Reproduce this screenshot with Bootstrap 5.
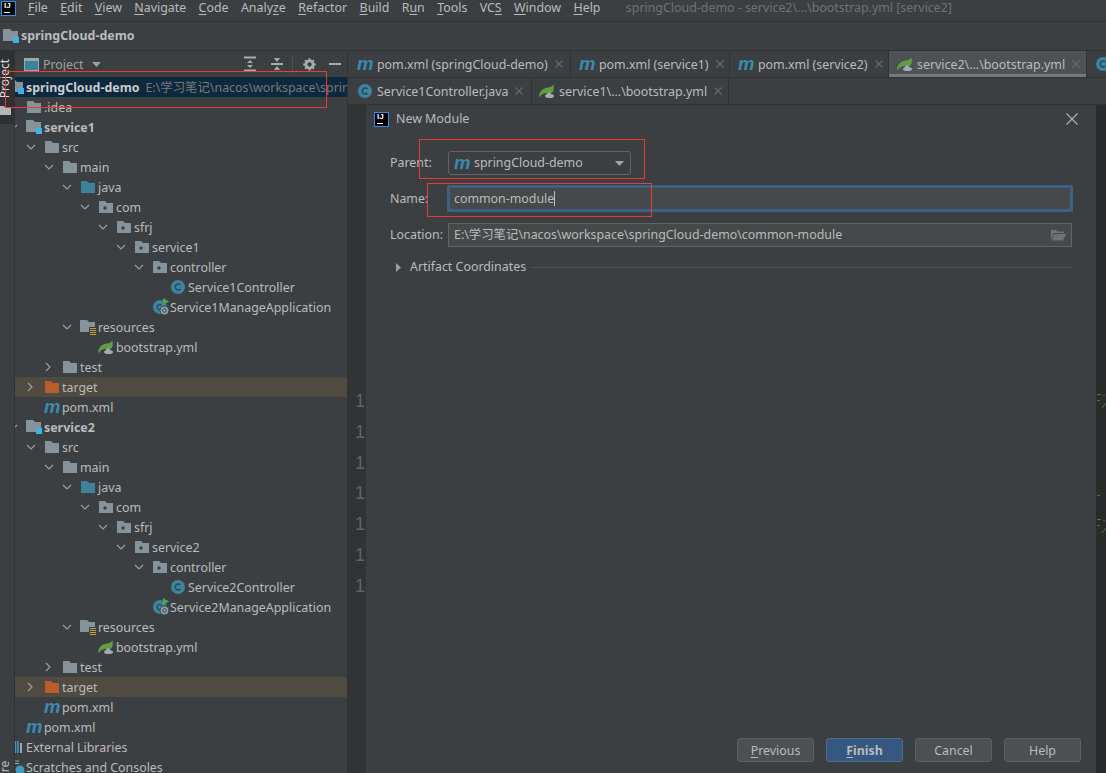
<!DOCTYPE html>
<html lang="en">
<head>
<meta charset="utf-8">
<title>springCloud-demo</title>
<link rel="stylesheet" href="https://cdn.jsdelivr.net/npm/bootstrap@5.3.0/dist/css/bootstrap.min.css">
<style>
html,body{height:773px;overflow:hidden;background:#3c3f41;}
body{position:relative;font-family:"Noto Sans","Noto Sans CJK SC",sans-serif;font-size:12.4px;color:#bbb;line-height:20px;}
svg{display:block;flex:none;}
.menu-bar{height:22px;border-bottom:1px solid #323232;padding:0 0 5px 1px;white-space:nowrap;overflow:hidden;}
.app-logo{width:15px;height:15px;background:#000;border:1px solid #2f8fea;color:#fff;font:700 8px/8px "Liberation Sans",sans-serif;padding-left:2px;margin-right:12px;position:relative;flex:none;}
.app-logo::after{content:"";position:absolute;left:2px;bottom:2px;width:6px;height:1px;background:#fff;}
.app-logo.dlg{margin:0 7px 0 0;}
.menu-item{margin-right:12.4px;}
.win-title{color:#6f7375;margin-left:13px;}
.crumb-bar{height:29px;border-bottom:1px solid #323232;padding:0 0 0 3px;color:#bbb;font-weight:700;}
.work{height:722px;}
.side-strip{width:15px;flex:none;border-right:1px solid #323232;overflow:hidden;}
.strip-btn{height:73px;background:#2e3032;padding-top:8px;}
.vtext{writing-mode:vertical-rl;transform:rotate(180deg);color:#ddd;line-height:10px;font-size:12px;white-space:nowrap;}
.strip-folder{margin-top:7px;}
.vtext.ure{margin-top:631px;color:#bbb;height:58px;}
.tool-pane{width:333px;flex:none;border-right:1px solid #323232;overflow:hidden;}
.tool-head{height:26px;padding-left:9px;}
.tool-title{margin-left:4px;color:#9da0a2;padding-top:2px;}
.head-caret{margin-left:9px;}
.tool-acts{margin-left:auto;padding-right:6px;}
.act-gap{margin-right:13px;}
.tool-sep{width:1px;height:17px;background:#4e5254;margin:0 10px 0 8px;}
.tree-row{height:20px;white-space:nowrap;overflow:hidden;color:#bbb;padding-top:2px;}
.tree-row.sel{background:#0d293e;color:#ccc;}
.tree-row.excl{background:#4f4b41;}
.tree-row b{font-weight:700;}
.path-note{color:#787878;margin-left:6px;}
.arr{width:18px;height:20px;flex:none;display:flex;align-items:center;}
.arr-rt{margin-left:1px;}
.ico{width:18px;flex:none;}
.tree-row .arr,.tree-row .ico,.tree-row .mvn,.ed-tab .ico,.ed-tab .mvn,.ed-tab .cls{margin-top:-2px;}
.dm{margin-left:-7px;}
.d1{margin-left:11px;}.d2{margin-left:29px;}.d3{margin-left:47px;}.d4{margin-left:65px;}
.d5{margin-left:83px;}.d6{margin-left:101px;}.d7{margin-left:119px;}.d8{margin-left:137px;}
.root-ico{margin-left:-7px;}
.mvn{font:italic 700 18.500px/20px "Liberation Sans",sans-serif;color:#3a8bb0;width:18px;flex:none;height:20px;letter-spacing:-1px;}
.editor{min-width:0;}
.tab-row{height:27px;border-bottom:1px solid #323232;}
.tab-row.first{padding-left:2px;height:27px;}
.ed-tab{height:26px;padding:2px 0 0 8px;border-right:1px solid #323232;white-space:nowrap;overflow:hidden;flex:none;color:#bbb;position:relative;}
.ed-tab .ico{margin-right:2px;width:18px;}
.ed-tab .mvn{margin-right:2px;}
.ed-tab .cls{margin-left:7px;flex:none;}
.ed-tab.on{background:#4e5254;}
.ed-tab.on::after{content:"";position:absolute;left:0;right:0;bottom:0;height:3px;background:#747a80;}
.w1{width:221px;padding-left:7px;}.w2{width:159px;}.w3{width:159px;}.w4{width:198px;}
.w5{width:184px;padding-left:9px;}.w6{width:197px;padding-left:7px;}
.ed-body{height:669px;}
.gutter{width:18px;flex:none;background:#313335;padding-top:281px;padding-left:7px;overflow:hidden;color:#606366;font:18px/30.8px "Liberation Sans",sans-serif;}
.new-module{background:#3c3f41;padding:0 15px 11px 24px;min-width:0;}
.dlg-title{height:28px;margin-left:-16px;padding-right:3px;}
.dlg-x{margin-left:auto;}
.field-row{padding-right:9px;}
.field-label{width:58px;flex:none;}
.parent-row{margin-top:18px;}
.combo{width:183px;height:24px;background:#3c3f41;border:1px solid #646464;border-radius:3px;padding:0 6px 0 5px;}
.combo .mvn{margin-right:2px;}
.name-row{margin-top:10px;padding-right:8px;}
.name-input{height:27px;margin-left:-1px;flex:1;background:#45494a;border:3px solid #3d6185;border-radius:2px;color:#bbb;padding:0 4px;}
.txt-caret{display:inline-block;width:1px;height:15px;background:#bbb;}
.loc-row{margin-top:11px;}
.loc-input{height:24px;flex:1;background:#45494a;border:1px solid #646464;color:#bbb;padding:0 5px;}
.folder-btn{margin-left:auto;}
.art-row{margin-top:10px;height:20px;padding:0 9px 0 0;margin-left:6px;}
.art-tri{margin-right:9px;}
.art-line{height:1px;flex:1;background:#505355;margin-left:6px;}
.dlg-foot{gap:12px;}
.btn.idea-btn{width:77px;height:24px;padding:1px 0 0;font-size:12.400px;line-height:21px;color:#bbb;background:#4c5052;border:1px solid #5e6060;border-radius:3px;}
.btn.idea-btn.primary{background:#365880;border-color:#4c708c;font-weight:700;}
.right-strip{width:10px;flex:none;background:#2b2b2b;padding-top:288px;overflow:hidden;}
.red-box{position:absolute;border:1px solid #ea3b3b;pointer-events:none;}
.rb1{left:5px;top:71px;width:322px;height:37px;}
.rb2{left:419px;top:139px;width:226px;height:40px;}
.rb3{left:427px;top:183px;width:225px;height:34px;}
u{text-underline-offset:2px;}
</style>
</head>
<body>
<svg width="0" height="0" class="position-absolute">
<defs>
<symbol id="f" viewBox="0 0 16 14"><path d="M1 1h6l2 2h6v10H1z" fill="#87939a"/></symbol>
<symbol id="fj" viewBox="0 0 16 14"><path d="M1 1h6l2 2h6v10H1z" fill="#3f8199"/></symbol>
<symbol id="ft" viewBox="0 0 16 14"><path d="M1 1h6l2 2h6v10H1z" fill="#b95c2e"/></symbol>
<symbol id="fp" viewBox="0 0 16 14"><path d="M1 1h6l2 2h6v10H1z" fill="#87939a"/><circle cx="7" cy="8" r="1.700" fill="#3c3f41"/></symbol>
<symbol id="fm" viewBox="0 0 18 16"><path d="M0 1h7l2 2h6v10H0z" fill="#87939a"/><rect x="10" y="9" width="6" height="6" fill="#3db3e3"/></symbol>
<symbol id="fr" viewBox="0 0 18 16"><path d="M0 1h7l2 2h6v10H0z" fill="#87939a"/><rect x="9" y="8" width="7" height="8" fill="#3c3f41"/><path d="M10 9.500h6M10 11.500h6M10 13.500h6M10 15.500h6" stroke="#c9a13a" stroke-width="1"/></symbol>
<symbol id="c" viewBox="0 0 16 16"><circle cx="8" cy="8" r="7" fill="#3d84a0"/><path d="M10.500 6a3 3 0 1 0 0 4" fill="none" stroke="#2b4a58" stroke-width="1.500"/></symbol>
<symbol id="capp" viewBox="0 0 18 18"><circle cx="8" cy="9" r="7" fill="#3d84a0"/><path d="M9.500 7.500a2.500 2.500 0 1 0 0 3.200" fill="none" stroke="#2b4a58" stroke-width="1.400"/><path d="M11 0l6 3.500-6 3.500z" fill="#4fa64b"/><circle cx="12.500" cy="12.500" r="4.500" fill="#8ea2ad" stroke="#3c3f41"/><circle cx="12.500" cy="12.500" r="1.800" fill="none" stroke="#3c3f41"/></symbol>
<symbol id="leaf" viewBox="0 0 16 14"><path d="M0 12C1 6 5 4 9 3.500c2-.3 4-1 5.500-3 .6 3 .4 6-1 8-2 1-4 0-6.500.5C4 9.500 2 10.500 1 13z" fill="#5f9e42"/><ellipse cx="10.500" cy="12" rx="4.500" ry="2" fill="#a6abb0"/><circle cx="10" cy="10.500" r="2.200" fill="#a6abb0"/></symbol>
<symbol id="dn" viewBox="0 0 10 6"><path d="M1 1l4 4 4-4" fill="none" stroke="#9a9ea0" stroke-width="1.200"/></symbol>
<symbol id="rt" viewBox="0 0 6 10"><path d="M1 1l4 4-4 4" fill="none" stroke="#9a9ea0" stroke-width="1.200"/></symbol>
<symbol id="x" viewBox="0 0 8 8"><path d="M.5.5l7 7M7.500.5l-7 7" stroke="#666a6c" stroke-width="1.100"/></symbol>
</defs>
</svg>

<div class="menu-bar d-flex align-items-center">
  <div class="app-logo">IJ</div>
  <span class="menu-item"><u>F</u>ile</span><span class="menu-item"><u>E</u>dit</span><span class="menu-item"><u>V</u>iew</span><span class="menu-item"><u>N</u>avigate</span><span class="menu-item"><u>C</u>ode</span><span class="menu-item">Analy<u>z</u>e</span><span class="menu-item"><u>R</u>efactor</span><span class="menu-item"><u>B</u>uild</span><span class="menu-item">R<u>u</u>n</span><span class="menu-item"><u>T</u>ools</span><span class="menu-item">VC<u>S</u></span><span class="menu-item"><u>W</u>indow</span><span class="menu-item"><u>H</u>elp</span>
  <span class="win-title">springCloud-demo - service2\...\bootstrap.yml [service2]</span>
</div>
<div class="crumb-bar d-flex align-items-center">
  <svg width="18" height="16"><use href="#fm"/></svg><span>springCloud-demo</span>
</div>

<div class="work d-flex">
  <div class="side-strip">
    <div class="strip-btn">
      <div class="vtext">Project</div>
      <svg class="strip-folder" width="11" height="10" viewBox="0 0 11 10"><path d="M-2 1h6l2 2h5v7H-2z" fill="#b4b6b7"/></svg>
    </div>
    <div class="vtext ure">Structure</div>
  </div>

  <div class="tool-pane">
    <div class="tool-head d-flex align-items-center">
      <svg width="15" height="13" viewBox="0 0 15 13"><rect x=".5" y=".5" width="14" height="12" fill="#3f8199" stroke="#9aa7b0"/><rect x="1" y="1" width="13" height="2" fill="#9aa7b0"/></svg>
      <span class="tool-title">Project</span>
      <svg class="head-caret" width="9" height="5" viewBox="0 0 9 5"><path d="M0 0h9L4.500 5z" fill="#9aa0a3"/></svg>
      <div class="tool-acts d-flex align-items-center">
        <svg width="14" height="16" class="act-gap" viewBox="0 0 14 16"><path d="M1 1.500h12M1 14.500h12" stroke="#a8adb0" stroke-width="2"/><path d="M7 4l3 3H4zM7 12l3-3H4z" fill="#a8adb0"/></svg>
        <svg width="14" height="16" viewBox="0 0 14 16"><path d="M1 8h12" stroke="#a8adb0" stroke-width="2"/><path d="M7 6L4 2h6zM7 10l3 4H4z" fill="#a8adb0"/></svg>
        <div class="tool-sep"></div>
        <svg width="13" height="13" class="act-gap" viewBox="0 0 14 14"><circle cx="7" cy="7" r="4.200" fill="none" stroke="#a8adb0" stroke-width="2.600"/><path d="M7 .2v13.600M.2 7h13.600M2.200 2.200l9.600 9.600M11.800 2.200l-9.600 9.600" stroke="#a8adb0" stroke-width="2"/><circle cx="7" cy="7" r="2.300" fill="#3c3f41"/></svg>
        <svg width="12" height="2" viewBox="0 0 12 2"><rect width="12" height="2" fill="#a8adb0"/></svg>
      </div>
    </div>

    <div class="tree-row sel d-flex align-items-center"><span class="ico root-ico"><svg width="18" height="16"><use href="#fm"/></svg></span><b>springCloud-demo</b><span class="path-note">E:\学习笔记\nacos\workspace\springCloud-demo</span></div>
    <div class="tree-row d-flex align-items-center"><span class="arr dm"></span><span class="ico"><svg width="16" height="14"><use href="#f"/></svg></span>.idea</div>
    <div class="tree-row d-flex align-items-center"><span class="arr dm"><svg width="10" height="6"><use href="#dn"/></svg></span><span class="ico"><svg width="18" height="16"><use href="#fm"/></svg></span><b>service1</b></div>
    <div class="tree-row d-flex align-items-center"><span class="arr d1"><svg width="10" height="6"><use href="#dn"/></svg></span><span class="ico"><svg width="16" height="14"><use href="#f"/></svg></span>src</div>
    <div class="tree-row d-flex align-items-center"><span class="arr d2"><svg width="10" height="6"><use href="#dn"/></svg></span><span class="ico"><svg width="16" height="14"><use href="#f"/></svg></span>main</div>
    <div class="tree-row d-flex align-items-center"><span class="arr d3"><svg width="10" height="6"><use href="#dn"/></svg></span><span class="ico"><svg width="16" height="14"><use href="#fj"/></svg></span>java</div>
    <div class="tree-row d-flex align-items-center"><span class="arr d4"><svg width="10" height="6"><use href="#dn"/></svg></span><span class="ico"><svg width="16" height="14"><use href="#fp"/></svg></span>com</div>
    <div class="tree-row d-flex align-items-center"><span class="arr d5"><svg width="10" height="6"><use href="#dn"/></svg></span><span class="ico"><svg width="16" height="14"><use href="#fp"/></svg></span>sfrj</div>
    <div class="tree-row d-flex align-items-center"><span class="arr d6"><svg width="10" height="6"><use href="#dn"/></svg></span><span class="ico"><svg width="16" height="14"><use href="#fp"/></svg></span>service1</div>
    <div class="tree-row d-flex align-items-center"><span class="arr d7"><svg width="10" height="6"><use href="#dn"/></svg></span><span class="ico"><svg width="16" height="14"><use href="#fp"/></svg></span>controller</div>
    <div class="tree-row d-flex align-items-center"><span class="arr d8"></span><span class="ico"><svg width="16" height="16"><use href="#c"/></svg></span>Service1Controller</div>
    <div class="tree-row d-flex align-items-center"><span class="arr d7"></span><span class="ico"><svg width="18" height="18"><use href="#capp"/></svg></span>Service1ManageApplication</div>
    <div class="tree-row d-flex align-items-center"><span class="arr d3"><svg width="10" height="6"><use href="#dn"/></svg></span><span class="ico"><svg width="18" height="16"><use href="#fr"/></svg></span>resources</div>
    <div class="tree-row d-flex align-items-center"><span class="arr d4"></span><span class="ico"><svg width="16" height="14"><use href="#leaf"/></svg></span>bootstrap.yml</div>
    <div class="tree-row d-flex align-items-center"><span class="arr d2"><svg class="arr-rt" width="6" height="10"><use href="#rt"/></svg></span><span class="ico"><svg width="16" height="14"><use href="#f"/></svg></span>test</div>
    <div class="tree-row excl d-flex align-items-center"><span class="arr d1"><svg class="arr-rt" width="6" height="10"><use href="#rt"/></svg></span><span class="ico"><svg width="16" height="14"><use href="#ft"/></svg></span>target</div>
    <div class="tree-row d-flex align-items-center"><span class="arr d1"></span><span class="mvn">m</span>pom.xml</div>
    <div class="tree-row d-flex align-items-center"><span class="arr dm"><svg width="10" height="6"><use href="#dn"/></svg></span><span class="ico"><svg width="18" height="16"><use href="#fm"/></svg></span><b>service2</b></div>
    <div class="tree-row d-flex align-items-center"><span class="arr d1"><svg width="10" height="6"><use href="#dn"/></svg></span><span class="ico"><svg width="16" height="14"><use href="#f"/></svg></span>src</div>
    <div class="tree-row d-flex align-items-center"><span class="arr d2"><svg width="10" height="6"><use href="#dn"/></svg></span><span class="ico"><svg width="16" height="14"><use href="#f"/></svg></span>main</div>
    <div class="tree-row d-flex align-items-center"><span class="arr d3"><svg width="10" height="6"><use href="#dn"/></svg></span><span class="ico"><svg width="16" height="14"><use href="#fj"/></svg></span>java</div>
    <div class="tree-row d-flex align-items-center"><span class="arr d4"><svg width="10" height="6"><use href="#dn"/></svg></span><span class="ico"><svg width="16" height="14"><use href="#fp"/></svg></span>com</div>
    <div class="tree-row d-flex align-items-center"><span class="arr d5"><svg width="10" height="6"><use href="#dn"/></svg></span><span class="ico"><svg width="16" height="14"><use href="#fp"/></svg></span>sfrj</div>
    <div class="tree-row d-flex align-items-center"><span class="arr d6"><svg width="10" height="6"><use href="#dn"/></svg></span><span class="ico"><svg width="16" height="14"><use href="#fp"/></svg></span>service2</div>
    <div class="tree-row d-flex align-items-center"><span class="arr d7"><svg width="10" height="6"><use href="#dn"/></svg></span><span class="ico"><svg width="16" height="14"><use href="#fp"/></svg></span>controller</div>
    <div class="tree-row d-flex align-items-center"><span class="arr d8"></span><span class="ico"><svg width="16" height="16"><use href="#c"/></svg></span>Service2Controller</div>
    <div class="tree-row d-flex align-items-center"><span class="arr d7"></span><span class="ico"><svg width="18" height="18"><use href="#capp"/></svg></span>Service2ManageApplication</div>
    <div class="tree-row d-flex align-items-center"><span class="arr d3"><svg width="10" height="6"><use href="#dn"/></svg></span><span class="ico"><svg width="18" height="16"><use href="#fr"/></svg></span>resources</div>
    <div class="tree-row d-flex align-items-center"><span class="arr d4"></span><span class="ico"><svg width="16" height="14"><use href="#leaf"/></svg></span>bootstrap.yml</div>
    <div class="tree-row d-flex align-items-center"><span class="arr d2"><svg class="arr-rt" width="6" height="10"><use href="#rt"/></svg></span><span class="ico"><svg width="16" height="14"><use href="#f"/></svg></span>test</div>
    <div class="tree-row excl d-flex align-items-center"><span class="arr d1"><svg class="arr-rt" width="6" height="10"><use href="#rt"/></svg></span><span class="ico"><svg width="16" height="14"><use href="#ft"/></svg></span>target</div>
    <div class="tree-row d-flex align-items-center"><span class="arr d1"></span><span class="mvn">m</span>pom.xml</div>
    <div class="tree-row d-flex align-items-center"><span class="arr dm"></span><span class="mvn">m</span>pom.xml</div>
    <div class="tree-row d-flex align-items-center"><span class="ico root-ico"><svg class="ms-auto" width="18" height="14" viewBox="0 0 18 14"><path d="M7.500 1v12M10 1v12" stroke="#3d9bc7" stroke-width="1.500"/><path d="M13 3v10" stroke="#9aa7b0" stroke-width="2"/></svg></span>External Libraries</div>
    <div class="tree-row d-flex align-items-center"><span class="ico root-ico"><svg width="18" height="16" viewBox="0 0 18 16"><path d="M7 2h4M7 4.500h4" stroke="#9aa7b0"/><circle cx="12" cy="11" r="4.500" fill="#3d9bc7"/></svg></span>Scratches and Consoles</div>
  </div>

  <div class="editor flex-grow-1 d-flex flex-column">
    <div class="tab-row first d-flex">
      <div class="ed-tab w1 d-flex align-items-center"><span class="mvn">m</span>pom.xml (springCloud-demo)<svg class="cls" width="8" height="8"><use href="#x"/></svg></div>
      <div class="ed-tab w2 d-flex align-items-center"><span class="mvn">m</span>pom.xml (service1)<svg class="cls" width="8" height="8"><use href="#x"/></svg></div>
      <div class="ed-tab w3 d-flex align-items-center"><span class="mvn">m</span>pom.xml (service2)<svg class="cls" width="8" height="8"><use href="#x"/></svg></div>
      <div class="ed-tab on w4 d-flex align-items-center"><span class="ico"><svg width="16" height="14"><use href="#leaf"/></svg></span>service2\...\bootstrap.yml<svg class="cls" width="8" height="8"><use href="#x"/></svg></div>
      <div class="ed-tab d-flex align-items-center"><span class="ico"><svg width="16" height="16"><use href="#c"/></svg></span></div>
    </div>
    <div class="tab-row d-flex">
      <div class="ed-tab w5 d-flex align-items-center"><span class="ico"><svg width="16" height="16"><use href="#c"/></svg></span>Service1Controller.java<svg class="cls" width="8" height="8"><use href="#x"/></svg></div>
      <div class="ed-tab w6 d-flex align-items-center"><span class="ico"><svg width="16" height="14"><use href="#leaf"/></svg></span>service1\...\bootstrap.yml<svg class="cls" width="8" height="8"><use href="#x"/></svg></div>
    </div>
    <div class="ed-body d-flex">
      <div class="gutter">1<br>1<br>1<br>1<br>1<br>1<br>1</div>
      <div class="new-module flex-grow-1 d-flex flex-column">
        <div class="dlg-title d-flex align-items-center">
          <div class="app-logo dlg">IJ</div><span>New Module</span>
          <svg class="dlg-x" width="12" height="12" viewBox="0 0 12 12"><path d="M.5.5l11 11M11.500.5l-11 11" stroke="#b0b3b5" stroke-width="1.100"/></svg>
        </div>
        <div class="parent-row d-flex align-items-center">
          <label class="field-label">Parent:</label>
          <div class="combo d-flex align-items-center"><span class="mvn">m</span><span>springCloud-demo</span><svg class="ms-auto" width="9" height="5" viewBox="0 0 9 5"><path d="M0 0h9L4.500 5z" fill="#a0a4a6"/></svg></div>
        </div>
        <div class="name-row field-row d-flex align-items-center">
          <label class="field-label">Name:</label>
          <div class="name-input d-flex align-items-center">common-module<span class="txt-caret"></span></div>
        </div>
        <div class="loc-row field-row d-flex align-items-center">
          <label class="field-label">Location:</label>
          <div class="loc-input d-flex align-items-center"><span>E:\学习笔记\nacos\workspace\springCloud-demo\common-module</span>
            <svg class="folder-btn" width="15" height="12" viewBox="0 0 15 12"><path d="M0 1h5l1.500 1.500H13V4H3L0 11z" fill="#6e7375"/><path d="M3.500 5H15l-3 6.500H.8z" fill="#6e7375"/></svg>
          </div>
        </div>
        <div class="art-row d-flex align-items-center">
          <svg class="art-tri" width="5" height="9" viewBox="0 0 5 9"><path d="M0 0l5 4.500L0 9z" fill="#9a9da0"/></svg>
          <span>Artifact Coordinates</span>
          <div class="art-line"></div>
        </div>
        <div class="dlg-foot mt-auto d-flex justify-content-end">
          <button type="button" class="btn idea-btn"><u>P</u>revious</button>
          <button type="button" class="btn idea-btn primary"><u>F</u>inish</button>
          <button type="button" class="btn idea-btn">Cancel</button>
          <button type="button" class="btn idea-btn">Help</button>
        </div>
      </div>
      <div class="right-strip">
        <svg width="10" height="145" viewBox="0 0 10 145"><path d="M1 1.500h4M1 7.500h3M6 15l4-5M7 3l2-1M1 102.500h3M1 126.500h4M1 132.500h3M6 140l4-5M7 128l2-1" stroke="#4d7a42" stroke-width="1" fill="none"/></svg>
      </div>
    </div>
  </div>
</div>

<div class="red-box rb1"></div>
<div class="red-box rb2"></div>
<div class="red-box rb3"></div>
<script src="https://cdn.jsdelivr.net/npm/bootstrap@5.3.0/dist/js/bootstrap.bundle.min.js"></script>
</body>
</html>
